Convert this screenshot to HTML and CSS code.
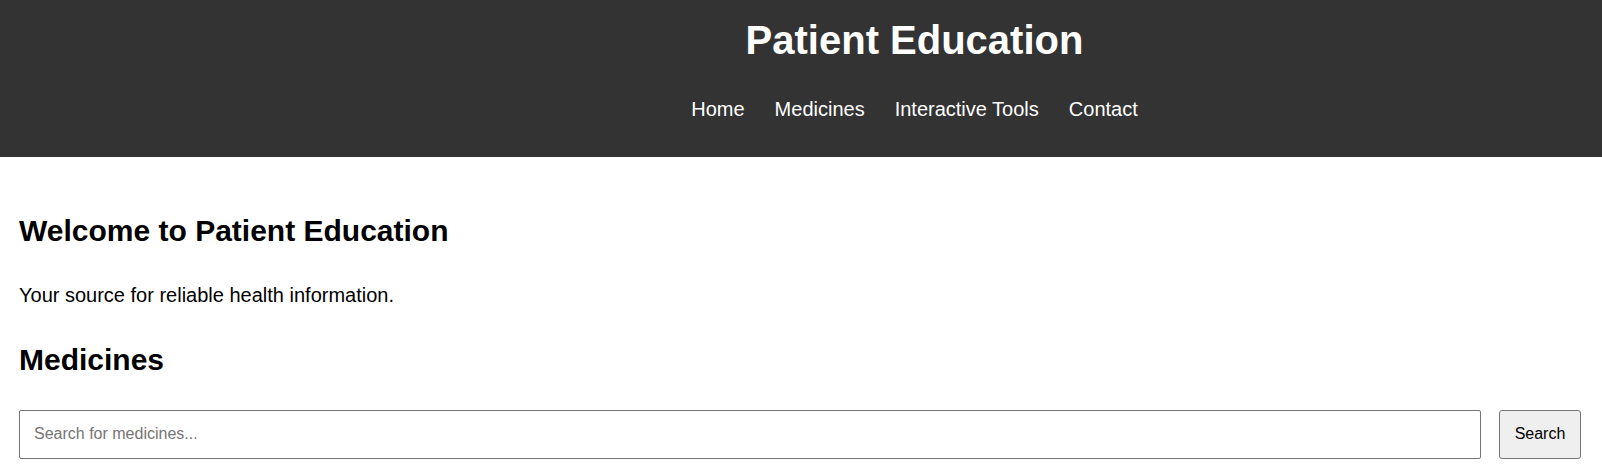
FILE: index.html
```html
<!DOCTYPE html>
<html lang="en">
<head>
<meta charset="utf-8">
<title>Patient Education</title>
<link rel="stylesheet" href="styles.css">
</head>
<body>
<header class="site-header">
  <h1 class="site-title">Patient Education</h1>
  <nav class="site-nav">
    <a href="#">Home</a>
    <a href="#">Medicines</a>
    <a href="#">Interactive Tools</a>
    <a href="#">Contact</a>
  </nav>
</header>
<main class="content">
  <section class="welcome">
    <h2 class="section-title">Welcome to Patient Education</h2>
    <p class="lead">Your source for reliable health information.</p>
  </section>
  <section class="medicines">
    <h2 class="section-title medicines-title">Medicines</h2>
    <form class="search" onsubmit="return false;">
      <input class="search-input" type="text" placeholder="Search for medicines...">
      <button class="search-button" type="submit">Search</button>
    </form>
  </section>
</main>
</body>
</html>
```

FILE: styles.css
```css
html, body {
  margin: 0;
  padding: 0;
  background: #ffffff;
}

body {
  font-family: "Liberation Sans", Arial, Helvetica, sans-serif;
  font-size: 20px;
  color: #000000;
}

.site-header {
  background: #333333;
  color: #ffffff;
  padding: 17px 0 36px 227px;
  text-align: center;
}

.site-title {
  margin: 0 0 35px;
  font-size: 40px;
  line-height: 46px;
  font-weight: bold;
}

.site-nav {
  display: flex;
  justify-content: center;
  gap: 30px;
  line-height: 23px;
}

.site-nav a {
  color: #ffffff;
  text-decoration: none;
}

.content {
  padding: 56px 21px 0 19px;
}

.section-title {
  margin: 0 0 35px;
  font-size: 30px;
  line-height: 36px;
  font-weight: bold;
}

.lead {
  margin: 0 0 35px;
  line-height: 23px;
}

.medicines-title {
  margin-bottom: 32px;
}

.search {
  display: flex;
  gap: 18px;
  margin: 0;
}

.search-input {
  flex: 1;
  box-sizing: border-box;
  height: 49px;
  margin: 0;
  padding: 0 14px 2px;
  border: 1px solid #767676;
  border-radius: 2px;
  font-family: "Liberation Sans", Arial, sans-serif;
  font-size: 16px;
  color: #000000;
  background: #ffffff;
}

.search-input::placeholder {
  color: #757575;
}

.search-button {
  box-sizing: border-box;
  width: 82px;
  height: 49px;
  margin: 0;
  padding: 0 0 2px;
  border: 1px solid #767676;
  border-radius: 3px;
  background: #efefef;
  font-family: "Liberation Sans", Arial, sans-serif;
  font-size: 16px;
  color: #000000;
}
```
